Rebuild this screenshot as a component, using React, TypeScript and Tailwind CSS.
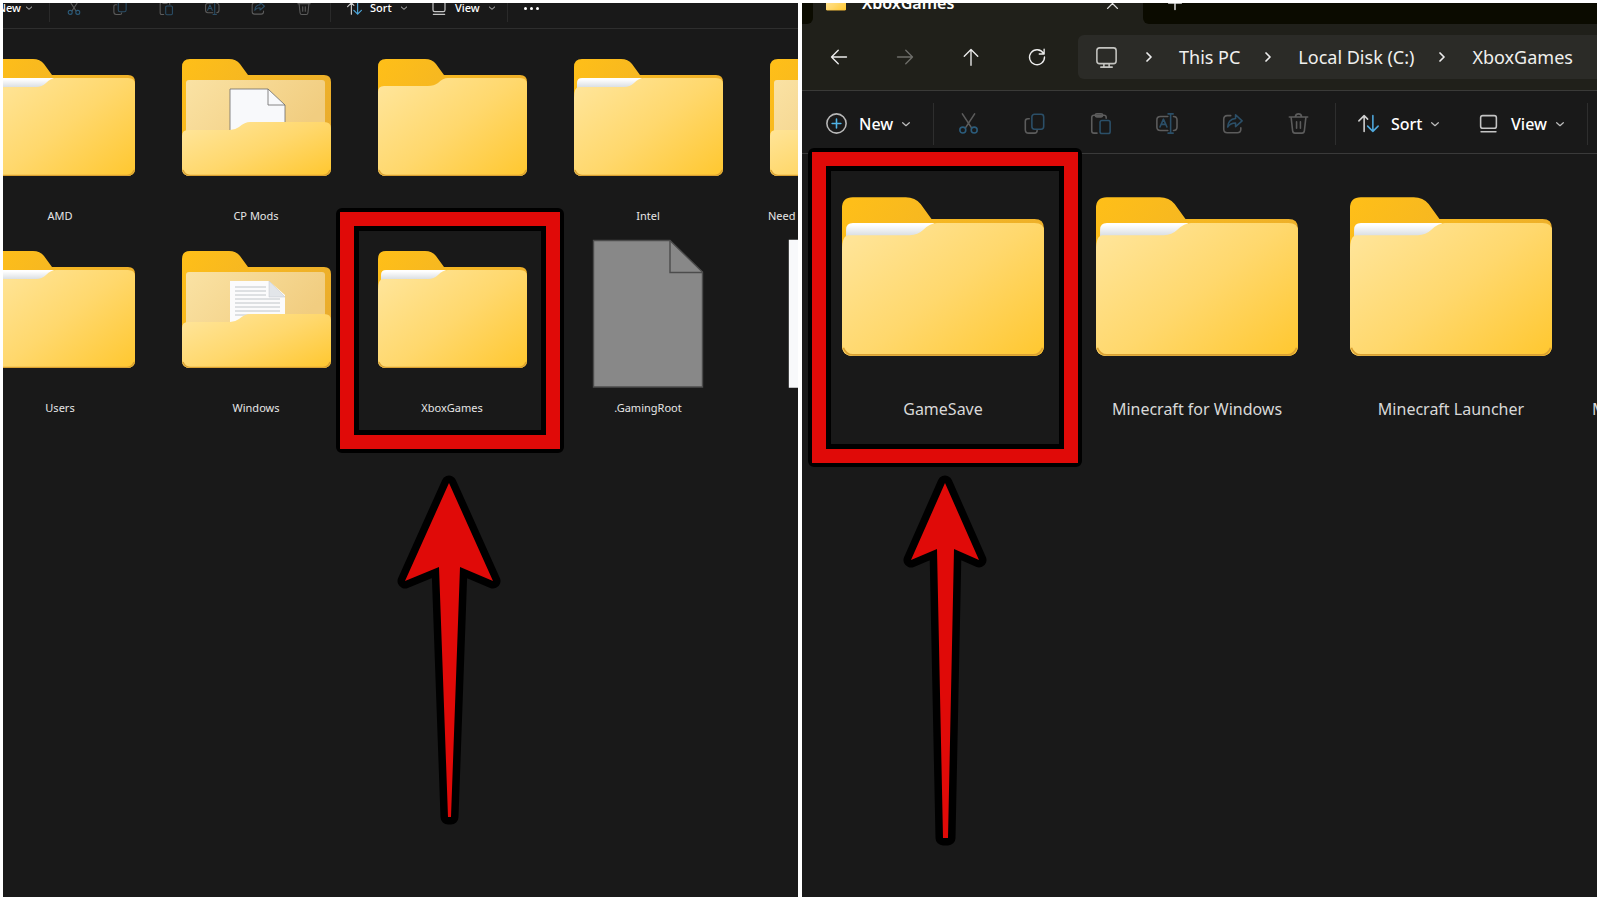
import { useId } from 'react';

type FolderKind = 'papers' | 'empty' | 'page' | 'lined' | 'open';

const FolderIcon = ({ kind, className }: { kind: FolderKind; className: string }) => {
    const id = useId();
    const isOpen = kind === 'page' || kind === 'lined' || kind === 'open';

    return (
        <svg viewBox="0 0 149 149" className={className} aria-hidden="true">
            <defs>
                <linearGradient id={`${id}-front`} x1="0" y1="0.1" x2="1" y2="0.95">
                    <stop offset="0" stopColor="#ffe59a" />
                    <stop offset="0.5" stopColor="#ffd86d" />
                    <stop offset="1" stopColor="#ffc832" />
                </linearGradient>
                <linearGradient id={`${id}-back`} x1="0" y1="0" x2="1" y2="0.6">
                    <stop offset="0" stopColor="#ffbf18" />
                    <stop offset="1" stopColor="#e9ac2e" />
                </linearGradient>
                <linearGradient id={`${id}-inner`} x1="0" y1="0" x2="1" y2="0.4">
                    <stop offset="0" stopColor="#fae2a4" />
                    <stop offset="1" stopColor="#f1cd80" />
                </linearGradient>
                <linearGradient id={`${id}-paper`} x1="0" y1="0" x2="0" y2="1">
                    <stop offset="0.1" stopColor="#ffffff" />
                    <stop offset="0.8" stopColor="#d5dadf" />
                </linearGradient>
            </defs>
            <g transform="translate(0 12)">
                <path d="M0 8Q0 0 8 0H47Q54 0 58 5L66 16H142Q149 16 149 23V109Q149 117 141 117H8Q0 117 0 109Z" fill={`url(#${id}-back)`} />
                {kind === 'papers' && <path d="M3 24Q3 19 8 19H68L60 32H3Z" fill={`url(#${id}-paper)`} />}
                {kind === 'papers' && (
                    <path d="M0 39Q0 28 5 28H50Q56 28 60 24Q65 19 70 19H142Q149 19 149 25V109Q149 117 141 117H8Q0 117 0 109Z" fill={`url(#${id}-front)`} />
                )}
                {kind === 'empty' && (
                    <path d="M0 33Q0 27 6 27H50Q56 27 60 24Q65 19 70 19H142Q149 19 149 25V109Q149 117 141 117H8Q0 117 0 109Z" fill={`url(#${id}-front)`} />
                )}
                {isOpen && <path d="M4 24Q4 21 7 21H140Q143 21 143 24V80H4Z" fill={`url(#${id}-inner)`} />}
                {kind === 'page' && (
                    <>
                        <path d="M48 30H86L103 46V75H48Z" fill="#f8f9fb" stroke="#6b6b6b" strokeWidth="0.8" />
                        <path d="M86 30V46H103" fill="none" stroke="#6b6b6b" strokeWidth="0.8" />
                    </>
                )}
                {kind === 'lined' && (
                    <>
                        <path d="M48 30H87L103 44V75H48Z" fill="#fbfbfc" />
                        <path d="M53 36H84M53 40H84M53 44H84M53 48H98M53 52H98M53 56H98M53 60H98M53 64H98" stroke="#b9bec4" strokeWidth="0.9" />
                        <path d="M87 30V46H103Z" fill="#e2e5e9" stroke="#c3c7cc" strokeWidth="0.5" />
                    </>
                )}
                {isOpen && (
                    <path d="M0 77Q0 71 6 71H48Q53 71 57 68Q63 63 68 63H142Q149 63 149 69V109Q149 117 141 117H8Q0 117 0 109Z" fill={`url(#${id}-front)`} />
                )}
                <path d="M1 111Q3 116.300 8 116.300H141Q146 116.300 148 111" fill="none" stroke="#d9a032" strokeWidth="1.300" />
            </g>
        </svg>
    );
};

const FileIcon = ({ fill, line, className }: { fill: string; line: string; className: string }) => (
    <svg viewBox="0 0 149 149" className={className} aria-hidden="true">
        <path d="M19.500 1.500H96L128.500 33V148H19.500Z" fill={fill} stroke={line} strokeWidth="1.400" />
        <path d="M96 1.500V33.500H128.500" fill="none" stroke={line} strokeWidth="1.400" />
    </svg>
);

const icons = {
    cut: (
        <>
            <path d="M5 1L15.500 17M19 1L8.500 17" stroke="#5c5c5c" />
            <circle cx="5.500" cy="19.500" r="3.400" stroke="#2b5c7c" />
            <circle cx="18.500" cy="19.500" r="3.400" stroke="#2b5c7c" />
        </>
    ),
    copy: (
        <>
            <path d="M6 6.500H4.500Q1.500 6.500 1.500 9.500V19Q1.500 23 5.500 23H12Q15 23 15 20" stroke="#5c5c5c" />
            <rect x="9" y="1.500" width="13.500" height="17" rx="3" stroke="#2b4f68" />
        </>
    ),
    paste: (
        <>
            <path d="M8 23H4.500Q2 23 2 20.500V5Q2 2.500 4.500 2.500H16Q18.500 2.500 18.500 5V6" stroke="#5c5c5c" />
            <rect x="6" y="0.800" width="8.500" height="3.600" rx="1.800" stroke="#5c5c5c" />
            <rect x="11.500" y="8.500" width="11.500" height="15" rx="2" stroke="#2b4f68" />
        </>
    ),
    rename: (
        <>
            <path d="M13.500 4H5Q1 4 1 8V16Q1 20 5 20H13.500M20 4Q24 4 24 8V16Q24 20 20 20" stroke="#5c5c5c" />
            <path d="M4.500 16L8.500 7L12.500 16M6 13H11M16.700 1V23M13.800 1H19.600M13.800 23H19.600" stroke="#2b4f68" />
        </>
    ),
    share: (
        <>
            <path d="M10 3H6Q2 3 2 7V18.500Q2 22.500 6 22.500H17.500Q21.500 22.500 21.500 18.500V17" stroke="#5c5c5c" />
            <path d="M15.500 2L23 9L15.500 15.500V11.500Q9.500 11.500 6.500 16Q7 7 15.500 6.300Z" stroke="#2b4f68" />
        </>
    ),
    trash: (
        <path d="M1.500 4.500H22.500M8.500 4Q9 1 12 1Q15 1 15.500 4M3.500 4.500L5.300 20.500Q5.600 23 8 23H16Q18.400 23 18.700 20.500L20.500 4.500M9.800 10V17.500M14.200 10V17.500" stroke="#5c5c5c" />
    ),
    create: (
        <>
            <circle cx="12" cy="12" r="11" stroke="#b8b8b8" />
            <path d="M12 7V17M7 12H17" stroke="#4fb3e6" />
        </>
    ),
    sort: (
        <>
            <path d="M7 21V3M1 9L7 3L11 7" stroke="#d0d0d0" />
            <path d="M17 3V21M11 15L17 21L23 15" stroke="#4fa8dc" />
        </>
    ),
    view: (
        <>
            <rect x="3" y="3" width="18" height="14.500" rx="2.500" stroke="#c4c4c4" />
            <path d="M3.500 21.500H20.500" stroke="#c4c4c4" />
        </>
    ),
    chevron: <path d="M4 9L12 16L20 9" stroke="#bdbdbd" strokeWidth="3" />,
    next: <path d="M8 4L16 12L8 20" stroke="#ececec" strokeWidth="3.500" />,
    back: <path d="M22 12H2M11 3L2 12L11 21" stroke="#ececec" />,
    forward: <path d="M2 12H22M13 3L22 12L13 21" stroke="#6d6d69" />,
    up: <path d="M12 23V2M3 11L12 2L21 11" stroke="#ececec" />,
    refresh: <path d="M20.500 7A10 10 0 1 0 22 12M21.500 1.500V8H15" stroke="#ececec" />,
    monitor: (
        <path d="M4 1H20Q23 1 23 4V16Q23 19 20 19H4Q1 19 1 16V4Q1 1 4 1ZM9 19V22.500M15 19V22.500M5.500 23H18.500" stroke="#c4c4c0" />
    ),
    close: <path d="M3 3L21 21M21 3L3 21" stroke="#e0e0e0" strokeWidth="2.500" />,
    plus: <path d="M12 1V23M1 12H23" stroke="#e0e0e0" strokeWidth="2.500" />,
};

const Icon = ({ name, className }: { name: keyof typeof icons; className: string }) => (
    <svg viewBox="0 0 24 24" fill="none" strokeWidth="1.800" strokeLinecap="round" strokeLinejoin="round" className={`shrink-0 overflow-visible ${className}`} aria-hidden="true">
        {icons[name]}
    </svg>
);

const fileActions = ['cut', 'copy', 'paste', 'rename', 'share', 'trash'] as const;

const SmallToolbar = () => (
    <div className="flex h-[26px] shrink-0 items-end overflow-hidden border-b border-[#2e2e2e]">
        <div className="flex h-10 shrink-0 items-center text-[11px] font-medium text-white">
            <button className="flex w-[46px] items-center justify-end gap-1 pr-4">
                New
                <Icon name="chevron" className="size-2" />
            </button>
            <div className="mr-px h-7 w-px bg-[#2a2a2a]" />
            {fileActions.map((name) => (
                <button key={name} aria-label={name} className="flex w-[46px] justify-center">
                    <Icon name={name} className="size-[14px]" />
                </button>
            ))}
            <div className="ml-[3px] h-7 w-px bg-[#2a2a2a]" />
            <button className="ml-4 flex w-[84px] items-center gap-2">
                <Icon name="sort" className="size-[15px]" />
                Sort
                <Icon name="chevron" className="size-2" />
            </button>
            <button className="flex w-[76px] items-center gap-2">
                <Icon name="view" className="size-4" />
                View
                <Icon name="chevron" className="size-2" />
            </button>
            <div className="h-7 w-px bg-[#2a2a2a]" />
            <button aria-label="More" className="ml-4 flex gap-[3px]">
                <span className="size-[3px] rounded-full bg-white" />
                <span className="size-[3px] rounded-full bg-white" />
                <span className="size-[3px] rounded-full bg-white" />
            </button>
        </div>
    </div>
);

const LargeToolbar = () => (
    <div className="flex h-[63px] shrink-0 items-center overflow-hidden border-b border-[#3a3a3a] pt-[3px] text-[16px] font-medium text-white">
        <button className="flex w-[131px] shrink-0 items-center gap-3 pl-6">
            <Icon name="create" className="size-[21px]" />
            New
            <Icon name="chevron" className="-ml-1 size-[10px]" />
        </button>
        <div className="mr-px h-[42px] w-px shrink-0 bg-[#2e2e2e]" />
        {fileActions.map((name) => (
            <button key={name} aria-label={name} className="flex w-[66px] shrink-0 justify-center">
                <Icon name={name} className="size-[21px]" />
            </button>
        ))}
        <div className="ml-1 h-[42px] w-px shrink-0 bg-[#2e2e2e]" />
        <button className="ml-[22px] flex w-[120px] shrink-0 items-center gap-3">
            <Icon name="sort" className="size-[21px]" />
            Sort
            <Icon name="chevron" className="-ml-1 size-[10px]" />
        </button>
        <button className="flex w-[109px] shrink-0 items-center gap-3">
            <Icon name="view" className="size-[21px]" />
            View
            <Icon name="chevron" className="-ml-1 size-[10px]" />
        </button>
        <div className="h-[42px] w-px shrink-0 bg-[#2e2e2e]" />
    </div>
);

const Arrow = ({ points, className, viewBox }: { points: string; className: string; viewBox: string }) => (
    <svg viewBox={viewBox} className={`absolute ${className}`} aria-hidden="true">
        <polygon points={points} fill="none" stroke="#000000" strokeWidth="15" strokeLinejoin="round" />
        <polygon points={points} fill="#e00a08" />
    </svg>
);

const Frame = ({ className }: { className: string }) => (
    <div className={`pointer-events-none absolute rounded-md border-4 border-black ${className}`}>
        <div className="h-full border-[14px] border-[#e00a08]">
            <div className="h-full border-[5px] border-black" />
        </div>
    </div>
);

const driveItems: { name: string; kind: FolderKind }[] = [
    { name: 'AMD', kind: 'papers' },
    { name: 'CP Mods', kind: 'page' },
    { name: '', kind: 'empty' },
    { name: 'Intel', kind: 'papers' },
    { name: 'Need', kind: 'open' },
    { name: 'Users', kind: 'papers' },
    { name: 'Windows', kind: 'lined' },
    { name: 'XboxGames', kind: 'papers' },
];

const DrivePanel = () => (
    <section className="relative flex min-w-0 flex-1 flex-col overflow-hidden bg-[#191919]">
        <SmallToolbar />
        <ul className="-ml-[41px] grid grid-cols-[repeat(5,196px)] gap-y-[13px] pt-[18px] text-[11px] leading-5 text-[#e6e6e6]">
            {driveItems.map((item, i) => (
                <li key={i} className="flex flex-col items-center gap-[10px]">
                    <FolderIcon kind={item.kind} className="size-[149px]" />
                    <span className={item.name === 'Need' ? 'h-5 w-[152px] text-left' : 'h-5'}>{item.name}</span>
                </li>
            ))}
            <li className="flex flex-col items-center gap-[10px]">
                <FileIcon fill="#888888" line="#4c4c4c" className="size-[149px]" />
                <span>.GamingRoot</span>
            </li>
            <li className="flex flex-col items-center">
                <FileIcon fill="#f8f9fb" line="#f8f9fb" className="size-[149px]" />
            </li>
        </ul>
        <Frame className="left-[333px] top-[205px] h-[245px] w-[228px]" />
        <Arrow
            viewBox="0 0 106 354"
            className="left-[394px] top-[470px] h-[354px] w-[106px]"
            points="52,10 96,108 63,94 54,344 51,344 42,94 8,108"
        />
    </section>
);

const crumbs = ['This PC', 'Local Disk (C:)', 'XboxGames'];

const GamesPanel = () => (
    <section className="relative flex min-w-0 flex-1 flex-col overflow-hidden bg-[#191919]">
        <div className="flex h-[21px] shrink-0 bg-[#20201a]">
            <div className="w-[11px] rounded-br-md bg-[#0b0b00]" />
            <div className="flex w-[330px] shrink-0 items-end overflow-hidden">
                <div className="flex h-[42px] w-full items-center pl-[13px] pr-6 text-[16px] font-semibold text-white">
                    <FolderIcon kind="papers" className="mr-4 size-5" />
                    XboxGames
                    <button aria-label="Close tab" className="ml-auto">
                        <Icon name="close" className="size-[13px]" />
                    </button>
                </div>
            </div>
            <div className="flex flex-1 items-end overflow-hidden rounded-bl-md bg-[#0b0b00] pl-[25px]">
                <button aria-label="New tab" className="flex h-[42px] items-center">
                    <Icon name="plus" className="size-[14px]" />
                </button>
            </div>
        </div>
        <nav className="flex h-[67px] shrink-0 items-center border-b border-[#3a3a38] bg-[#20201a] pl-1">
            {(['back', 'forward', 'up', 'refresh'] as const).map((name) => (
                <button key={name} aria-label={name} className="flex w-[66px] shrink-0 justify-center">
                    <Icon name={name} className="size-[18px]" />
                </button>
            ))}
            <div className="ml-2 flex h-11 flex-1 items-center overflow-hidden rounded-l-md bg-[#2b2b27] pl-[18px] text-[18px] whitespace-nowrap text-[#f0f0ee]">
                <Icon name="monitor" className="mr-1 size-[21px]" />
                {crumbs.map((crumb) => (
                    <div key={crumb} className="flex items-center">
                        <Icon name="next" className="mr-6 ml-[22px] size-[12px]" />
                        <a href="#">{crumb}</a>
                    </div>
                ))}
            </div>
        </nav>
        <LargeToolbar />
        <ul className="ml-[14px] grid grid-cols-[repeat(4,254px)] pt-[27px] text-[16px] leading-7 text-[#d8d8d8]">
            {['GameSave', 'Minecraft for Windows', 'Minecraft Launcher', 'M'].map((name) => (
                <li key={name} className="flex flex-col items-center gap-3">
                    <FolderIcon kind="papers" className="size-[202px]" />
                    <span className={name === 'M' ? 'w-full pl-[14px]' : ''}>{name}</span>
                </li>
            ))}
        </ul>
        <Frame className="left-[6px] top-[145px] h-[319px] w-[274px]" />
        <Arrow
            viewBox="0 0 86 374"
            className="left-[100px] top-[470px] h-[374px] w-[86px]"
            points="43,10 77,87 52,76 46,365 41,365 35,76 9,87"
        />
    </section>
);

const App = () => (
    <main className="flex h-screen gap-1 bg-white p-[3px] font-['Noto_Sans',sans-serif]">
        <DrivePanel />
        <GamesPanel />
    </main>
);

export default App;
